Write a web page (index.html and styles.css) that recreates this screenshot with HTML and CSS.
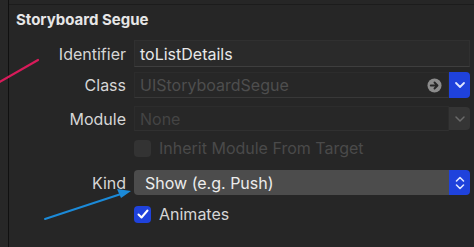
FILE: index.html
```html
<!DOCTYPE html>
<html lang="en">
<head>
    <meta charset="UTF-8">
    <title>Storyboard Segue</title>
    <link rel="stylesheet" href="styles.css">
</head>
<body>
    <div class="sidebar"></div>

    <!-- Attributes inspector -->
    <div class="inspector">
        <h1 class="section-title">Storyboard Segue</h1>

        <div class="form">
            <div class="row row-identifier">
                <label class="label">Identifier</label>
                <div class="field">toListDetails</div>
            </div>

            <div class="row row-class">
                <label class="label">Class</label>
                <div class="field disabled">
                    <span class="field-text">UIStoryboardSegue</span>
                    <span class="goto">
                        <svg width="15" height="15" viewBox="0 0 16 16">
                            <circle cx="8" cy="8" r="7.5" fill="#8c8c8c"/>
                            <path d="M4 8 H11 M8 4.8 L11.2 8 L8 11.2" stroke="#262626" stroke-width="2" fill="none" stroke-linecap="round" stroke-linejoin="round"/>
                        </svg>
                    </span>
                </div>
                <span class="drop blue">
                    <svg width="12" height="8" viewBox="0 0 12 8"><path d="M2 2 L6 6 L10 2" stroke="#dfe6ff" stroke-width="1.8" fill="none" stroke-linecap="round" stroke-linejoin="round"/></svg>
                </span>
            </div>

            <div class="row row-module">
                <label class="label">Module</label>
                <div class="field disabled faint">None</div>
                <span class="drop grey">
                    <svg width="12" height="8" viewBox="0 0 12 8"><path d="M2 2 L6 6 L10 2" stroke="#6a6a6a" stroke-width="1.5" fill="none" stroke-linecap="round" stroke-linejoin="round"/></svg>
                </span>
            </div>

            <div class="row row-inherit">
                <span class="label"></span>
                <div class="check-line disabled-text">
                    <span class="checkbox off"></span>
                    Inherit Module From Target
                </div>
            </div>

            <div class="row row-kind">
                <label class="label">Kind</label>
                <div class="popup">Show (e.g. Push)</div>
                <span class="drop blue stepper">
                    <svg width="12" height="16" viewBox="0 0 12 16"><path d="M2.5 6 L6 2.5 L9.5 6 M2.5 10 L6 13.5 L9.5 10" stroke="#dfe6ff" stroke-width="1.6" fill="none" stroke-linecap="round" stroke-linejoin="round"/></svg>
                </span>
            </div>

            <div class="row row-animates">
                <span class="label"></span>
                <div class="check-line">
                    <span class="checkbox on">
                        <svg width="14" height="12" viewBox="0 0 14 12"><path d="M2.5 6.5 L5.5 9.5 L11.5 2.5" stroke="#fff" stroke-width="2" fill="none" stroke-linecap="round" stroke-linejoin="round"/></svg>
                    </span>
                    Animates
                </div>
            </div>
        </div>
    </div>

    <!-- annotation arrows drawn over the screenshot -->
    <svg class="annotations" width="474" height="247" viewBox="0 0 474 247">
        <path d="M-2 83 L38 60" stroke="#d81b5a" stroke-width="2.2" stroke-linecap="round"/>
        <path d="M45 219 L124 193" stroke="#1b8ad8" stroke-width="2" stroke-linecap="round"/>
        <path d="M131 191 L117 189 L121 198 Z" fill="#1b8ad8"/>
    </svg>
</body>
</html>
```

FILE: styles.css
```css
body {
    margin: 0;
    width: 474px;
    height: 247px;
    overflow: hidden;
    display: flex;
    background-color: #262626;
    font-family: 'Inter', 'Liberation Sans', sans-serif;
    color: #d6d6d6;
    position: relative;
}

.sidebar {
    width: 8px;
    flex: none;
    background-color: #272727;
    border-right: 1px solid #101010;
}

.inspector {
    flex: 1;
    border-top: 1px solid #1c1c1c;
    margin-top: 4px;
}

.section-title {
    margin: 0;
    padding: 5px 0 0 7px;
    height: 30px;
    box-sizing: border-box;
    font-size: 15px;
    font-weight: bold;
    color: #e6e6e6;
    line-height: 20px;
}

.form {
    display: flex;
    flex-direction: column;
    padding-top: 5px;
}

.row {
    display: flex;
    align-items: center;
    padding-right: 4px;
}

.label {
    width: 117px;
    flex: none;
    text-align: right;
    margin-right: 8px;
    font-size: 16px;
}

.row-identifier { height: 27px; }
.row-class { height: 26px; margin-top: 5px; }
.row-module { height: 25px; margin-top: 8px; }
.row-inherit { height: 24px; margin-top: 5px; }
.row-kind { height: 25px; margin-top: 10px; }
.row-animates { height: 24px; margin-top: 7px; }

.field {
    flex: 1;
    height: 100%;
    box-sizing: border-box;
    display: flex;
    align-items: center;
    padding-left: 5px;
    font-size: 16px;
    color: #e8e8e8;
    background-color: #2a2a2a;
    border: 1px solid #303030;
    border-bottom-color: #3e3e3e;
}

.field.disabled {
    color: #4e4e4e;
    background-color: #272727;
    border-color: #2c2c2c;
    border-bottom-color: #383838;
}

.field.faint {
    color: #444;
    border-bottom-color: #303030;
}

.field-text {
    flex: 1;
}

.goto {
    display: flex;
    margin-right: 6px;
}

.drop {
    width: 21px;
    height: 100%;
    flex: none;
    display: flex;
    align-items: center;
    justify-content: center;
    border-radius: 0 4px 4px 0;
}

.drop.blue {
    background-color: #1f42dc;
}

.drop.grey {
    background-color: #353535;
    height: 23px;
}

.check-line {
    display: flex;
    align-items: center;
    font-size: 16px;
}

.disabled-text {
    color: #4a4a4a;
}

.checkbox {
    width: 17px;
    height: 17px;
    border-radius: 4px;
    margin-right: 8px;
    display: flex;
    align-items: center;
    justify-content: center;
    box-sizing: border-box;
}

.checkbox.off {
    background-color: #333;
}

.checkbox.on {
    background-color: #1f42dc;
}

.popup {
    flex: 1;
    height: 100%;
    display: flex;
    align-items: center;
    padding-left: 11px;
    font-size: 16px;
    color: #ececec;
    background-color: #4c4c4c;
    border-radius: 4px 0 0 4px;
}

.annotations {
    position: absolute;
    top: 0;
    left: 0;
    pointer-events: none;
}
```
